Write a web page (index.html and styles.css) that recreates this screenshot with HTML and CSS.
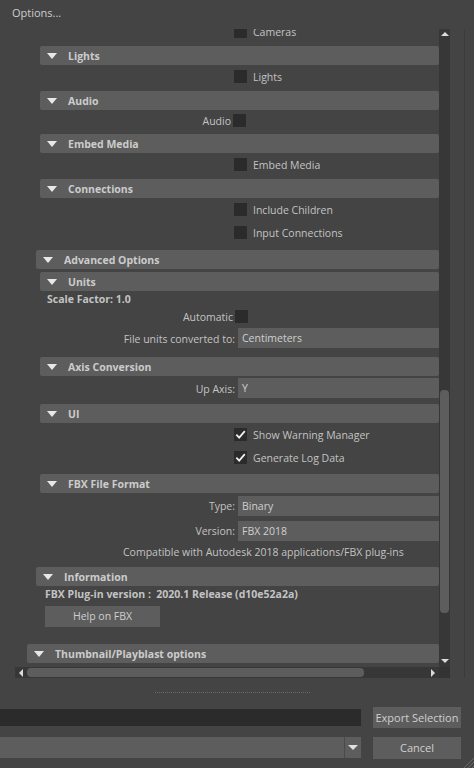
FILE: index.html
```html
<!DOCTYPE html>
<html>
<head>
<meta charset="utf-8">
<link rel="stylesheet" href="styles.css">
</head>
<body>
<div class="dialog">
  <div class="title">Options...</div>
  <div class="main">
    <div class="scrollarea">
      <div class="viewport">
        <div class="content">
          <div class="f1">
            <div class="f2 include">
              <div class="f3 cameras">
                <div class="body">
                  <div class="cbrow"><span class="cb"></span><span class="cbl">Cameras</span></div>
                </div>
              </div>
              <div class="f3">
                <div class="hdr"><span class="tri"></span><span class="ht">Lights</span></div>
                <div class="body">
                  <div class="cbrow"><span class="cb"></span><span class="cbl">Lights</span></div>
                </div>
              </div>
              <div class="f3">
                <div class="hdr"><span class="tri"></span><span class="ht">Audio</span></div>
                <div class="body">
                  <div class="lcrow short"><span class="lcl w191">Audio</span><span class="cb"></span></div>
                </div>
              </div>
              <div class="f3">
                <div class="hdr"><span class="tri"></span><span class="ht">Embed Media</span></div>
                <div class="body">
                  <div class="cbrow"><span class="cb"></span><span class="cbl">Embed Media</span></div>
                </div>
              </div>
              <div class="f3">
                <div class="hdr"><span class="tri"></span><span class="ht">Connections</span></div>
                <div class="body">
                  <div class="cbrow"><span class="cb"></span><span class="cbl">Include Children</span></div>
                  <div class="cbrow"><span class="cb"></span><span class="cbl">Input Connections</span></div>
                </div>
              </div>
            </div>
            <div class="f2 adv">
              <div class="hdr"><span class="tri"></span><span class="ht">Advanced Options</span></div>
              <div class="advbody">
                <div class="f3">
                  <div class="hdr"><span class="tri"></span><span class="ht">Units</span></div>
                  <div class="unitsbody">
                    <div class="scale">Scale Factor: 1.0</div>
                    <div class="lcrow auto"><span class="lcl w193">Automatic</span><span class="cb"></span></div>
                    <div class="frow"><span class="fl">File units converted to:</span><span class="field">Centimeters</span></div>
                  </div>
                </div>
                <div class="f3">
                  <div class="hdr"><span class="tri"></span><span class="ht">Axis Conversion</span></div>
                  <div class="axisbody">
                    <div class="frow"><span class="fl">Up Axis:</span><span class="field">Y</span></div>
                  </div>
                </div>
                <div class="f3">
                  <div class="hdr"><span class="tri"></span><span class="ht">UI</span></div>
                  <div class="uibody">
                    <div class="cbrow"><span class="cb on"><svg width="13" height="13" viewBox="0 0 13 13"><path d="M2.3 6.6 L5.2 9.6 L10.8 3.2" fill="none" stroke="#f0f0f0" stroke-width="1.8"/></svg></span><span class="cbl">Show Warning Manager</span></div>
                    <div class="cbrow"><span class="cb on"><svg width="13" height="13" viewBox="0 0 13 13"><path d="M2.3 6.6 L5.2 9.6 L10.8 3.2" fill="none" stroke="#f0f0f0" stroke-width="1.8"/></svg></span><span class="cbl">Generate Log Data</span></div>
                  </div>
                </div>
                <div class="f3">
                  <div class="hdr"><span class="tri"></span><span class="ht">FBX File Format</span></div>
                  <div class="fbxbody">
                    <div class="frow tall"><span class="fl">Type:</span><span class="field">Binary</span></div>
                    <div class="frow tall"><span class="fl">Version:</span><span class="field">FBX 2018</span></div>
                    <div class="compat">Compatible with Autodesk 2018 applications/FBX plug-ins</div>
                  </div>
                </div>
              </div>
            </div>
            <div class="f2">
              <div class="hdr"><span class="tri"></span><span class="ht">Information</span></div>
              <div class="infobody">
                <div class="ver">FBX Plug-in version :&nbsp; 2020.1 Release (d10e52a2a)</div>
                <div class="helpbtn">Help on FBX</div>
              </div>
            </div>
          </div>
          <div class="f1 thumb">
            <div class="hdr"><span class="tri"></span><span class="ht">Thumbnail/Playblast options</span></div>
          </div>
        </div>
      </div>
      <div class="vscroll">
        <span class="arr up"></span>
        <div class="vtrack"><div class="vthumb"></div></div>
        <span class="arr down"></span>
      </div>
      <div class="hscroll">
        <span class="arr left"></span>
        <div class="htrack"><div class="hthumb"></div></div>
        <span class="arr right"></span>
      </div>
      <div class="corner"></div>
    </div>
  </div>
  <div class="splitter"><div class="dots"></div></div>
  <div class="brow r1">
    <div class="darkfield"></div>
    <div class="btn">Export Selection</div>
  </div>
  <div class="brow r2">
    <div class="combo"><div class="combosel"></div><div class="combobtn"><span class="ctri"></span></div></div>
    <div class="btn cancel">Cancel</div>
  </div>
  <svg class="grip" width="12" height="12" viewBox="0 0 12 12"><path d="M12 2 L2 12 M12 6 L6 12 M12 10 L10 12" stroke="#6a6a6a" stroke-width="1"/></svg>
</div>
</body>
</html>
```

FILE: styles.css
```css
* { box-sizing: border-box; }
html, body { margin: 0; padding: 0; background: #444444; }
body {
  font-family: "Open Sans", "Noto Sans", sans-serif;
  font-size: 10.5px;
  color: #c3c3c3;
}
.dialog {
  position: relative;
  width: 474px;
  height: 768px;
  overflow: hidden;
  background: #444444;
  display: flex;
  flex-direction: column;
}
.title {
  height: 29px;
  padding: 5px 0 0 12px;
  font-size: 11px;
  color: #cdcdcd;
}
.main {
  height: 649px;
  display: flex;
  padding-left: 15px;
  border-right: 1px solid #3b3b3b;
  width: 465px;
}
.scrollarea {
  width: 435px;
  height: 649px;
  display: grid;
  grid-template-columns: 424px 11px;
  grid-template-rows: 638px 11px;
}
.viewport {
  overflow: hidden;
  background: #444444;
}
.content { margin-top: -9px; }
.f1 { margin-left: 12px; }
.f2 { margin-left: 9px; }
.f3 { margin-left: 4px; }
.include { padding-bottom: 3px; }
.hdr {
  height: 19px;
  background: #5d5d5d;
  border-radius: 2px;
  display: flex;
  align-items: center;
  padding-left: 7px;
}
.tri {
  width: 0; height: 0;
  border-left: 5.5px solid transparent;
  border-right: 5.5px solid transparent;
  border-top: 6px solid #e8e8e8;
  margin-right: 11px;
}
.ht {
  font-weight: 700;
  color: #cccccc;
  font-size: 10.5px;
}
.body { padding-bottom: 3px; }
.cbrow {
  height: 23px;
  display: flex;
  align-items: center;
  padding-left: 194px;
}
.cb {
  width: 13px;
  height: 13px;
  background: #2b2b2b;
  display: inline-flex;
  flex: none;
}
.cbl { margin-left: 6px; padding-top: 1px; }
.lcrow {
  height: 23px;
  display: flex;
  align-items: center;
}
.lcrow.short { height: 21px; }
.lcrow.auto { height: 19px; }
.lcl { text-align: right; margin-right: 2px; padding-top: 1px; }
.w191 { width: 191px; }
.w193 { width: 193px; }
.advbody { padding: 3px 0 3px; }
.unitsbody { padding-bottom: 7px; }
.scale {
  height: 16px;
  line-height: 17px;
  padding-left: 7px;
  font-weight: 700;
}
.frow {
  height: 24px;
  display: flex;
  align-items: center;
}
.frow.tall { height: 25px; }
.fl { width: 195px; text-align: right; margin-right: 3px; padding-top: 1px; }
.field {
  flex: 1;
  height: 20px;
  background: #5d5d5d;
  line-height: 21px;
  padding-left: 4px;
  color: #cfcfcf;
}
.axisbody { padding-bottom: 4px; }
.uibody { padding-bottom: 5px; }
.fbxbody { padding-bottom: 3px; }
.compat {
  height: 18px;
  line-height: 19px;
  padding-left: 83px;
}
.infobody { padding-bottom: 17px; }
.ver {
  height: 16px;
  line-height: 17px;
  padding-left: 9px;
  font-weight: 700;
}
.helpbtn {
  margin: 4px 0 0 9px;
  width: 115px;
  height: 21px;
  background: #5d5d5d;
  text-align: center;
  line-height: 21px;
  color: #cfcfcf;
}
.vscroll {
  background: #373737;
  display: flex;
  flex-direction: column;
  align-items: center;
}
.vtrack { flex: 1; width: 100%; position: relative; }
.vthumb {
  position: absolute;
  left: 1px; right: 1px;
  top: 351px;
  height: 223px;
  background: #5d5d5d;
  border-radius: 4px;
}
.arr { width: 0; height: 0; flex: none; }
.arr.up { border-left: 4px solid transparent; border-right: 4px solid transparent; border-bottom: 4px solid #dcdcdc; margin: 3px 0 3px; }
.arr.down { border-left: 4px solid transparent; border-right: 4px solid transparent; border-top: 4px solid #dcdcdc; margin: 3px 0 4px; }
.hscroll {
  background: #373737;
  display: flex;
  align-items: center;
}
.htrack { flex: 1; height: 100%; position: relative; }
.hthumb {
  position: absolute;
  top: 1px; bottom: 1px;
  left: 0;
  width: 337px;
  background: #5d5d5d;
  border-radius: 4px;
}
.arr.left { border-top: 4px solid transparent; border-bottom: 4px solid transparent; border-right: 4px solid #dcdcdc; margin: 0 4px 0 4px; }
.arr.right { border-top: 4px solid transparent; border-bottom: 4px solid transparent; border-left: 4px solid #dcdcdc; margin: 0 4px 0 4px; }
.corner { background: #333333; }
.splitter {
  height: 29px;
  display: flex;
  align-items: center;
  padding-left: 155px;
}
.dots {
  width: 155px;
  height: 1px;
  background: repeating-linear-gradient(90deg, #6a6a6a 0 1px, transparent 1px 2px);
}
.brow { display: flex; align-items: center; }
.r1 { height: 21px; }
.r2 { height: 23px; margin-top: 8px; }
.darkfield {
  width: 361px;
  height: 17px;
  background: #2b2b2b;
}
.btn {
  margin-left: 12px;
  width: 88px;
  height: 21px;
  background: #5d5d5d;
  color: #d0d0d0;
  text-align: center;
  line-height: 21px;
  font-size: 11px;
}
.btn.cancel { height: 22px; line-height: 22px; }
.combo {
  width: 361px;
  height: 21px;
  background: #5d5d5d;
  display: flex;
}
.combosel { flex: 1; }
.combobtn {
  width: 17px;
  border-left: 1px solid #4a4a4a;
  display: flex;
  align-items: center;
  justify-content: center;
}
.ctri {
  width: 0; height: 0;
  border-left: 5px solid transparent;
  border-right: 5px solid transparent;
  border-top: 5px solid #e0e0e0;
}
.grip { position: absolute; right: 0; bottom: 0; }
```
